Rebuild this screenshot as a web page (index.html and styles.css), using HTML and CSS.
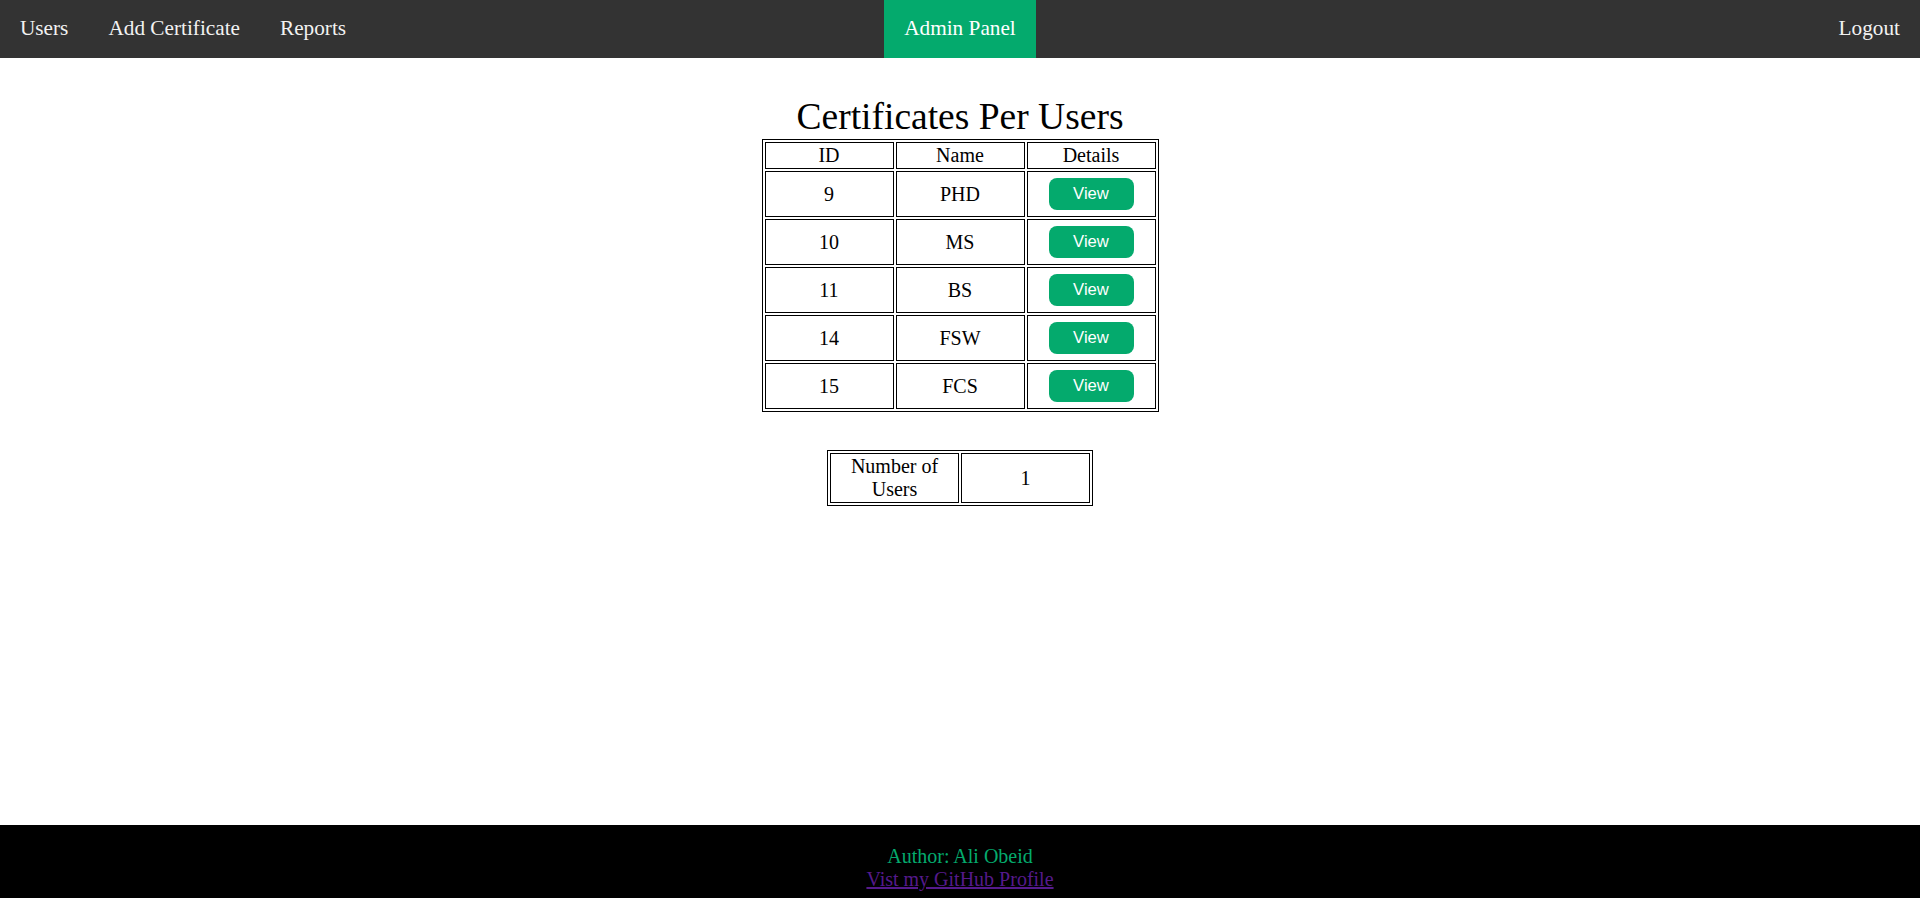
FILE: index.html
```html
<!DOCTYPE html>
<html lang="en">
<head>
<meta charset="utf-8">
<title>Admin Panel - Reports</title>
<link rel="stylesheet" href="styles.css">
</head>
<body>
<nav class="topnav">
  <div class="nav-left">
    <a href="#" class="nav-link">Users</a>
    <a href="#" class="nav-link">Add Certificate</a>
    <a href="#" class="nav-link">Reports</a>
  </div>
  <div class="nav-center">
    <a href="#" class="nav-link active">Admin Panel</a>
  </div>
  <div class="nav-right">
    <a href="#" class="nav-link">Logout</a>
  </div>
</nav>

<main class="content">
  <h1 class="page-title">Certificates Per Users</h1>
  <table class="data-table">
    <tr class="head-row"><td>ID</td><td>Name</td><td>Details</td></tr>
    <tr><td>9</td><td>PHD</td><td><button class="view-btn">View</button></td></tr>
    <tr><td>10</td><td>MS</td><td><button class="view-btn">View</button></td></tr>
    <tr><td>11</td><td>BS</td><td><button class="view-btn">View</button></td></tr>
    <tr><td>14</td><td>FSW</td><td><button class="view-btn">View</button></td></tr>
    <tr><td>15</td><td>FCS</td><td><button class="view-btn">View</button></td></tr>
  </table>

  <table class="data-table count-table">
    <tr><td>Number of Users</td><td>1</td></tr>
  </table>
</main>

<footer class="site-footer">
  <div class="author">Author: Ali Obeid</div>
  <a href="#" class="gh-link">Vist my GitHub Profile</a>
</footer>
</body>
</html>
```

FILE: styles.css
```css
html, body {
  margin: 0;
  padding: 0;
}

body {
  font-family: "Liberation Serif", "Times New Roman", serif;
  font-size: 20px;
  color: #000;
  background: #fff;
  min-height: 100vh;
  display: flex;
  flex-direction: column;
}

/* Top navigation */
.topnav {
  background-color: #333333;
  display: grid;
  grid-template-columns: 1fr auto 1fr;
  height: 58px;
}

.nav-left {
  display: flex;
}

.nav-right {
  display: flex;
  justify-content: flex-end;
}

.nav-link {
  display: block;
  color: #f2f2f2;
  text-decoration: none;
  font-size: 21.25px;
  line-height: 23px;
  padding: 17px 20px 18px;
}

.nav-link.active {
  background-color: #04AA6D;
  color: #ffffff;
}

/* Main content */
.content {
  flex: 1;
  display: flex;
  flex-direction: column;
  align-items: center;
}

.page-title {
  font-size: 37.5px;
  font-weight: normal;
  line-height: 42px;
  margin: 37.5px 0 1.5px;
  text-align: center;
}

.data-table {
  border: 1px solid #000;
  border-collapse: separate;
  border-spacing: 2px;
}

.data-table td {
  border: 1px solid #000;
  padding: 1px;
  width: 125px;
  text-align: center;
  vertical-align: middle;
  line-height: 23px;
}

.view-btn {
  display: block;
  margin: 5px auto;
  width: 85px;
  height: 32px;
  padding: 0;
  border: none;
  border-radius: 8px;
  background-color: #04AA6D;
  color: #ffffff;
  font-family: "Liberation Sans", Arial, sans-serif;
  font-size: 16.67px;
  cursor: pointer;
}

.count-table {
  margin-top: 38px;
}

/* Footer */
.site-footer {
  background-color: #000000;
  height: 73px;
  box-sizing: border-box;
  padding-top: 20px;
  text-align: center;
  line-height: 23px;
}

.author {
  color: #04AA6D;
}

.gh-link {
  color: #551A8B;
  text-decoration: underline;
}
```
